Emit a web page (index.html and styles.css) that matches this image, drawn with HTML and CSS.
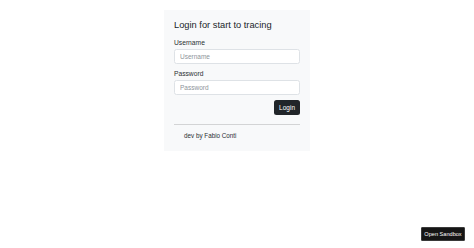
FILE: index.html
```html
<!DOCTYPE html>
<html lang="en">
<head>
    <meta charset="UTF-8">
    <title>Login</title>
    <link rel="stylesheet" href="styles.css">
</head>
<body>
    <div class="box">       <!-- login card -->
        <h4 class="title">Login for start to tracing</h4>
        <form class="login">
            <div class="field">
                <label for="username">Username</label>
                <input type="text" id="username" placeholder="Username">
            </div>
            <div class="field">
                <label for="password">Password</label>
                <input type="password" id="password" placeholder="Password">
            </div>
            <div class="actions">
                <button type="button">Login</button>
            </div>
        </form>
        <hr>
        <p class="credits">dev by Fabio Conti</p>
    </div>

    <a class="sandbox" href="#">Open Sandbox</a>
</body>
</html>
```

FILE: styles.css
```css
body{
    margin: 0;
    background: #fff;
    color: #212529;
    font-family: "Liberation Sans", Arial, sans-serif;
}
.box{
    width: 126px;
    margin: 10px auto 0;
    padding: 9px 10px 10px 10px;
    background: #f8f9fa;
}
.title{
    margin: 0 0 7px;
    font-size: 9.3px;
    font-weight: normal;
    line-height: 12px;
}
.field{
    margin-bottom: 5px;
}
.field label{
    display: block;
    font-size: 6.7px;
    line-height: 9px;
    margin-bottom: 2px;
    color: #2b2f33;
}
.field input{
    display: block;
    box-sizing: border-box;
    width: 100%;
    height: 15px;
    margin: 0;
    padding: 0 5px;
    border: 1px solid #dee2e6;
    border-radius: 2.5px;
    background: #fff;
    font-family: inherit;
    font-size: 6.5px;
    color: #212529;
}
.field input::placeholder{
    color: #8d949a;
}
.actions{
    display: flex;
    justify-content: flex-end;
    margin-top: 1px;
}
.actions button{
    height: 15px;
    padding: 0 5px;
    border: none;
    border-radius: 2.5px;
    background: #212529;
    color: #fff;
    font-family: inherit;
    font-size: 6.5px;
}
hr{
    margin: 9px 0 0;
    border: 0;
    border-top: 1px solid #d3d4d5;
}
.credits{
    margin: 6px 0 0;
    padding-left: 10px;
    font-size: 6.3px;
    line-height: 10px;
    color: #2b2f33;
}
.sandbox{
    position: fixed;
    right: 9px;
    bottom: 7px;
    width: 44px;
    height: 14px;
    box-sizing: border-box;
    border: 1px solid #3a3a3a;
    border-radius: 1px;
    background: #151515;
    color: #fff;
    font-size: 5.6px;
    line-height: 12px;
    text-align: center;
    text-decoration: none;
}
```
